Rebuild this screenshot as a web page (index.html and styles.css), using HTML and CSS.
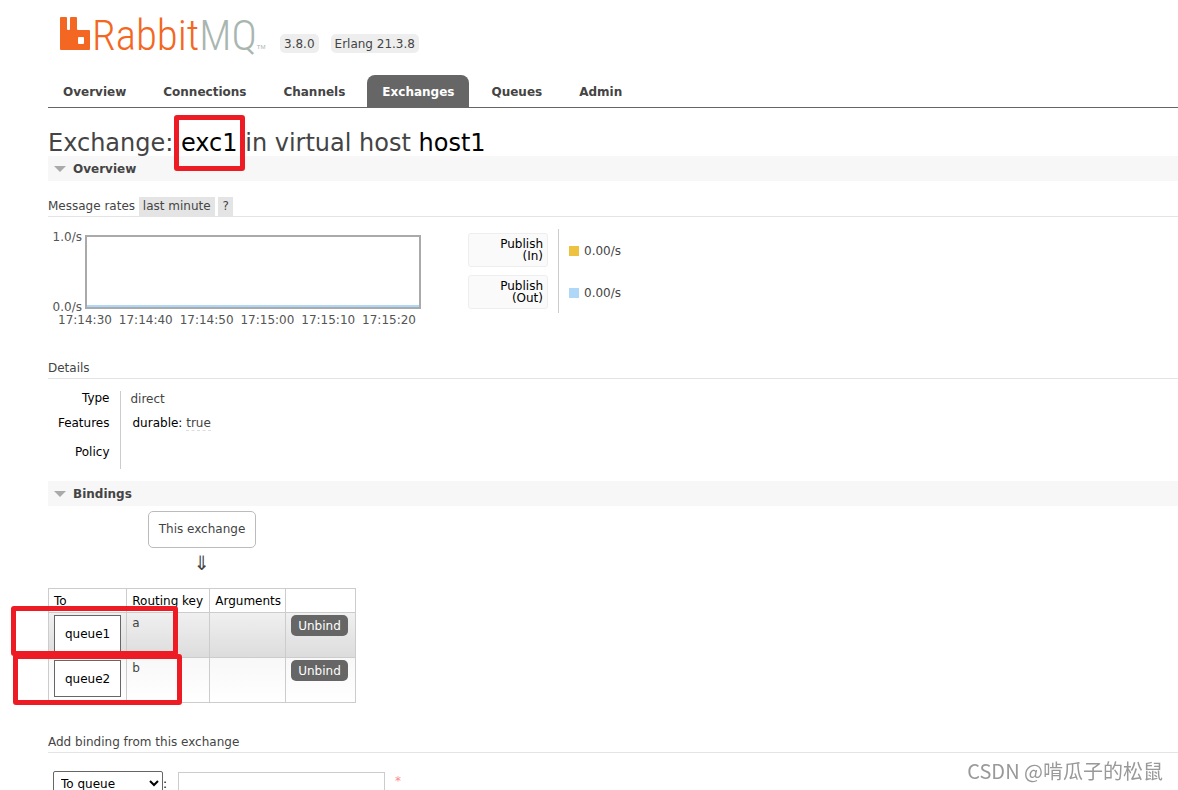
FILE: index.html
```
<!DOCTYPE html>
<html lang="en">
<head>
    <meta charset="UTF-8">
    <meta name="viewport" content="width=device-width, initial-scale=1.0">
    <title>RabbitMQ Management</title>
    <link rel="stylesheet" href="styles.css">
</head>
<body>
    <header>
        <div class="brand">
            <a href="#" class="logo">
                <svg width="30" height="33" viewBox="0 0 30 33" aria-hidden="true">
                    <path fill="#f36722" fill-rule="evenodd" d="M1 0h5q1 0 1 1v11q0 1 1 1h1q1 0 1-1V1q0-1 1-1h5q1 0 1 1v11q0 1 1 1h11q1 0 1 1v18q0 1-1 1H1q-1 0-1-1V1q0-1 1-1zM19 20q-1 0-1 1v5q0 1 1 1h4q1 0 1-1v-5q0-1-1-1z"/>
                </svg>
                <span class="wordmark">Rabbit<span class="mq">MQ</span></span>
                <span class="tm">TM</span>
            </a>
            <span class="version">3.8.0</span>
            <span class="version">Erlang 21.3.8</span>
        </div>
        <nav class="tabs">
            <a href="#">Overview</a>
            <a href="#">Connections</a>
            <a href="#">Channels</a>
            <a href="#" class="selected">Exchanges</a>
            <a href="#">Queues</a>
            <a href="#">Admin</a>
        </nav>
    </header>

    <main>
        <h1>Exchange: <b class="marked">exc1</b> in virtual host <b>host1</b></h1>

        <section class="overview">
            <h2>Overview</h2>
            <h3>Message rates <button class="option">last minute</button> <button class="option">?</button></h3>
            <div class="rates">
                <div class="chart">
                    <div class="y-axis"><span>1.0/s</span><span>0.0/s</span></div>
                    <div class="plot"></div>
                    <div class="x-axis">
                        <span>17:14:30</span>
                        <span>17:14:40</span>
                        <span>17:14:50</span>
                        <span>17:15:00</span>
                        <span>17:15:10</span>
                        <span>17:15:20</span>
                    </div>
                </div>
                <table class="legend">
                    <tr>
                        <th><button class="rate-name">Publish<br>(In)</button></th>
                        <td><i class="swatch in"></i>0.00/s</td>
                    </tr>
                    <tr>
                        <th><button class="rate-name">Publish<br>(Out)</button></th>
                        <td><i class="swatch out"></i>0.00/s</td>
                    </tr>
                </table>
            </div>

            <h3>Details</h3>
            <table class="facts">
                <tr>
                    <th>Type</th>
                    <td>direct</td>
                </tr>
                <tr class="features">
                    <th>Features</th>
                    <td><span class="feature">durable:</span> <abbr>true</abbr></td>
                </tr>
                <tr>
                    <th>Policy</th>
                    <td></td>
                </tr>
            </table>
        </section>

        <section class="bindings">
            <h2>Bindings</h2>
            <div class="flow">
                <span class="this-exchange">This exchange</span>
                <span class="arrow">&dArr;</span>
            </div>
            <table class="list">
                <thead>
                    <tr>
                        <th>To</th>
                        <th>Routing key</th>
                        <th>Arguments</th>
                        <th></th>
                    </tr>
                </thead>
                <tbody>
                    <tr>
                        <td class="mark-first"><a href="#" class="queue">queue1</a></td>
                        <td>a</td>
                        <td></td>
                        <td><button class="unbind">Unbind</button></td>
                    </tr>
                    <tr>
                        <td class="mark-second"><a href="#" class="queue">queue2</a></td>
                        <td>b</td>
                        <td></td>
                        <td><button class="unbind">Unbind</button></td>
                    </tr>
                </tbody>
            </table>

            <h3>Add binding from this exchange</h3>
            <form class="add-binding">
                <select id="destination-type" aria-label="Destination type">
                    <option>To queue</option>
                    <option>To exchange</option>
                </select>
                <label for="destination">:</label>
                <input type="text" id="destination">
                <span class="mand">*</span>
            </form>
        </section>
    </main>

    <div class="watermark">CSDN @啃瓜子的松鼠</div>
</body>
</html>
```
FILE: styles.css
```
*,
*::before,
*::after {
    box-sizing: border-box;
}

body {
    margin: 0;
    height: 100vh;
    overflow: hidden;
    background: #fff;
    color: #444;
    font: 12px/16px Verdana, "DejaVu Sans", sans-serif;
}

header,
main {
    margin-left: 48px;
}

a {
    color: inherit;
    text-decoration: none;
}

button {
    font: inherit;
    cursor: pointer;
}

/* header */
.brand {
    display: flex;
    align-items: flex-end;
    gap: 12px;
    height: 53px;
    padding-left: 12px;
}

.logo {
    display: flex;
    align-items: flex-end;
    width: 208px;
    height: 50px;
    margin-bottom: 3px;
}

.logo svg {
    flex: none;
}

.wordmark {
    margin-left: 2px;
    color: #f36722;
    font: 300 43px/30px "Roboto Condensed", "Open Sans Condensed", Lato, sans-serif;
}

.mq {
    color: #a9b6b0;
}

.tm {
    color: #a9b6b0;
    font: 6px/6px "Liberation Sans", sans-serif;
}

.version {
    padding: 2px 4px 0;
    border-radius: 5px;
    background: #eee;
    line-height: 17px;
}

.tabs {
    display: flex;
    gap: 7px;
    height: 55px;
    padding-top: 22px;
    border-bottom: 1px solid #666;
}

.tabs a {
    padding: 9px 15px 7px;
    border-radius: 8px 8px 0 0;
    font-weight: bold;
}

.tabs .selected {
    background: #666;
    color: #fff;
}

/* headings */
h1 {
    margin: 22px 0 0;
    font-size: 24px;
    font-weight: normal;
    line-height: 26px;
}

h1 b {
    color: #000;
    font-weight: normal;
}

h2 {
    display: flex;
    align-items: center;
    gap: 7px;
    height: 25px;
    margin: 0;
    padding-left: 6px;
    background: #f7f7f7;
    font-size: 12px;
}

h2::before {
    content: "";
    border: 6px solid transparent;
    border-top-color: #aaa;
    border-bottom: 0;
}

h3 {
    margin: 0;
    border-bottom: 1px solid #e4e4e4;
    font-size: 12px;
    font-weight: normal;
    line-height: 19px;
}

.overview h3:first-of-type {
    margin-top: 16px;
}

.option {
    padding: 0 4px;
    border: 0;
    background: #e4e4e4;
    color: #444;
    line-height: 19px;
}

/* message rates */
.rates {
    display: flex;
    align-items: flex-start;
    gap: 47px;
    height: 142px;
    padding-top: 12px;
}

.chart {
    display: grid;
    grid-template-columns: 34px 336px;
    grid-template-rows: 74px auto;
    column-gap: 3px;
    row-gap: 3px;
    padding-top: 6px;
    color: #545454;
}

.y-axis {
    display: flex;
    flex-direction: column;
    justify-content: space-between;
    text-align: right;
    margin: -6px 0;
}

.plot {
    border: 2px solid #aaa;
    box-shadow: inset 0 -2px #afd8f8;
}

.x-axis {
    grid-column: 1 / 3;
    display: flex;
    justify-content: space-between;
    padding: 0 5px 0 10px;
}

.legend {
    border-collapse: collapse;
}

.legend th {
    padding: 4px 10px 4px 0;
    border-right: 1px solid #ccc;
}

.legend td {
    padding: 2px 10px 0;
}

.rate-name {
    display: block;
    width: 80px;
    height: 34px;
    padding: 0 4px;
    border: 1px solid #eee;
    border-radius: 3px;
    background: #fafafa;
    color: #000;
    font-weight: normal;
    line-height: 12px;
    text-align: right;
}

.swatch {
    display: inline-block;
    width: 10px;
    height: 10px;
    margin-right: 5px;
    vertical-align: -1px;
}

.swatch.in {
    background: #edc240;
}

.swatch.out {
    background: #afd8f8;
}

/* details */
.facts {
    margin: 12px 0;
    border-collapse: collapse;
}

.facts th {
    width: 72px;
    padding: 0 10px 10px 0;
    border-right: 1px solid #ccc;
    color: #000;
    font-weight: normal;
    text-align: right;
    vertical-align: top;
    line-height: 14px;
}

.facts td {
    padding: 0 10px;
    vertical-align: top;
}

.facts .features th {
    padding-top: 1px;
    padding-bottom: 15px;
}

.facts .features td {
    padding-left: 12px;
}

.feature {
    color: #000;
}

abbr {
    border-bottom: 1px dashed #ddd;
}

/* bindings */
.flow {
    display: flex;
    flex-direction: column;
    align-items: center;
    width: 308px;
    padding-top: 5px;
}

.this-exchange {
    padding: 10px;
    border: 1px solid #bbb;
    border-radius: 5px;
    line-height: 15px;
}

.arrow {
    margin: 3px 0 13px;
    font-size: 20px;
    line-height: 24px;
}

.list {
    width: 308px;
    margin-bottom: 30px;
    border-collapse: collapse;
}

.list th,
.list td {
    padding: 2px 5px;
    border: 1px solid #ccc;
    text-align: left;
    vertical-align: top;
}

.list th {
    padding: 4px 5px 3px;
    color: #000;
    font-weight: normal;
}

.list th:nth-child(1) {
    width: 77px;
}

.list th:nth-child(2) {
    width: 83px;
}

.list th:nth-child(3) {
    width: 76px;
    padding-right: 4px;
}

.list td {
    height: 45px;
}

.list tbody tr:nth-child(odd) {
    background: linear-gradient(#f0f0f0, #dcdcdc);
}

.list tbody tr:nth-child(even) {
    background: linear-gradient(#f8f8f8, #fff);
}

.queue {
    display: block;
    padding: 11px 10px 10px;
    border: 1px solid #666;
    background: #fff;
    color: #000;
    line-height: 14px;
}

.unbind {
    display: block;
    height: 21px;
    padding: 0 7px;
    border: 0;
    border-radius: 5px;
    background: #666;
    color: #fff;
}

/* add binding */
.add-binding {
    display: flex;
    align-items: flex-start;
    padding: 18px 5px 0;
}

.add-binding select {
    width: 110px;
    height: 25px;
    padding: 0 3px;
    border: 1px solid #666;
    border-radius: 2px;
    background: #fff;
    color: #000;
    font: inherit;
}

.add-binding label {
    width: 15px;
    padding-top: 5px;
    color: #000;
}

.add-binding input {
    width: 207px;
    height: 25px;
    margin-top: 1px;
    border: 1px solid #ccc;
}

.mand {
    margin-left: 10px;
    padding-top: 2px;
    color: #f88;
}

/* red marker frames */
.marked,
.mark-first,
.mark-second {
    position: relative;
}

.marked::after,
.mark-first::after,
.mark-second::after {
    content: "";
    position: absolute;
    z-index: 1;
    border: 5px solid #ed1c24;
    border-radius: 3px;
}

.marked::after {
    inset: -14px -7px -14px -7px;
}

.mark-first::after {
    top: -7px;
    left: -38px;
    width: 167px;
    height: 50px;
}

.mark-second::after {
    top: -4px;
    left: -36px;
    width: 169px;
    height: 51px;
}

.watermark {
    position: fixed;
    right: 15px;
    bottom: 6px;
    color: #999;
    font: 20px/26px "Noto Sans CJK SC", sans-serif;
}
```
